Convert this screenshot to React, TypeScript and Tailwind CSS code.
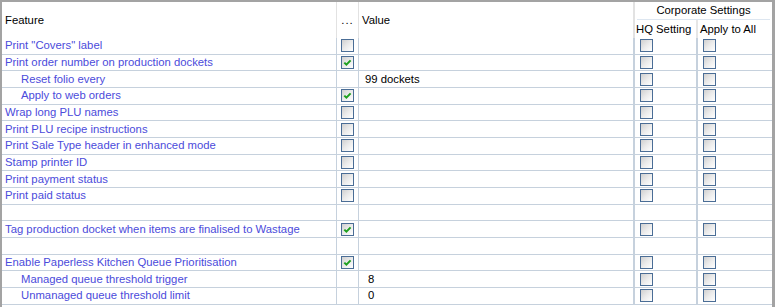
import type { ReactNode } from 'react';

type Row = {
  label?: string;
  indent?: boolean;
  check?: boolean | null;
  value?: string;
  num?: boolean;
  corp?: boolean;
};

const rows: Row[] = [
  { label: 'Print "Covers" label', check: false, corp: true },
  { label: 'Print order number on production dockets', check: true, corp: true },
  { label: 'Reset folio every', indent: true, check: null, value: '99 dockets', corp: true },
  { label: 'Apply to web orders', indent: true, check: true, corp: true },
  { label: 'Wrap long PLU names', check: false, corp: true },
  { label: 'Print PLU recipe instructions', check: false, corp: true },
  { label: 'Print Sale Type header in enhanced mode', check: false, corp: true },
  { label: 'Stamp printer ID', check: false, corp: true },
  { label: 'Print payment status', check: false, corp: true },
  { label: 'Print paid status', check: false, corp: true },
  {},
  { label: 'Tag production docket when items are finalised to Wastage', check: true, corp: true },
  {},
  { label: 'Enable Paperless Kitchen Queue Prioritisation', check: true, corp: true },
  { label: 'Managed queue threshold trigger', indent: true, check: null, value: '8', num: true, corp: true },
  { label: 'Unmanaged queue threshold limit', indent: true, check: null, value: '0', num: true, corp: true },
];

const Box = ({ checked }: { checked?: boolean }) => (
  <span className="relative block w-[13px] h-[13px] border border-[#4a6d96] bg-gradient-to-br from-[#d0d0d0] via-[#ebebeb] to-white">
    {checked && (
      <svg viewBox="0 0 11 11" className="absolute inset-0 w-[11px] h-[11px]">
        <path d="M2.3 5.6 L4.4 7.7 L8.6 3.4" fill="none" stroke="#1fa01f" strokeWidth="2" />
      </svg>
    )}
  </span>
);

const Cell = ({ children, className = '' }: { children?: ReactNode; className?: string }) => (
  <div className={`flex items-center h-[16.67px] border-b border-r border-[#c6d1dd] ${className}`}>{children}</div>
);

export default function App() {
  return (
    <div
      className="w-[775px] h-[307px] overflow-hidden bg-white border-t-2 border-l-2 border-r-[3px] border-[#a3a3a3] text-[11.3px] text-black"
      style={{ fontFamily: '"Liberation Sans", Arial, sans-serif' }}
    >
      <div className="grid grid-cols-[335px_22px_276px_63px_1fr]">
        {/* header */}
        <div className="row-span-2 h-[36px] flex items-center pl-[3px] border-r border-[#e2e2e2]">Feature</div>
        <div className="row-span-2 h-[36px] flex items-center justify-center border-r border-[#e2e2e2] tracking-[1px]">...</div>
        <div className="row-span-2 h-[36px] flex items-center pl-[3px] border-r-2 border-[#e2e2e2]">Value</div>
        <div className="col-span-2 h-[18px] flex items-center justify-center mx-[2px] border-b border-[#dde6f0]">Corporate Settings</div>
        <div className="h-[18px] flex items-center pl-[1px] border-r-2 border-[#e6e6e6]">HQ Setting</div>
        <div className="h-[18px] flex items-center pl-[2px]">Apply to All</div>

        {rows.map((r, i) => (
          <Row key={i} r={r} />
        ))}
      </div>
    </div>
  );
}

const Row = ({ r }: { r: Row }) => (
  <>
    <Cell className={`text-[#4b4bdb] whitespace-nowrap ${r.indent ? 'pl-[19px]' : 'pl-[3px]'}`}>{r.label}</Cell>
    <Cell className="justify-center">{r.check !== null && r.label && <Box checked={r.check} />}</Cell>
    <Cell className={`border-r-2 ${r.num ? 'pl-[9px]' : 'pl-[6px]'}`}>{r.value}</Cell>
    <Cell className="pl-[5px] border-r-2">{r.corp && <Box />}</Cell>
    <Cell className="pl-[5px] border-r-0">{r.corp && <Box />}</Cell>
  </>
);
